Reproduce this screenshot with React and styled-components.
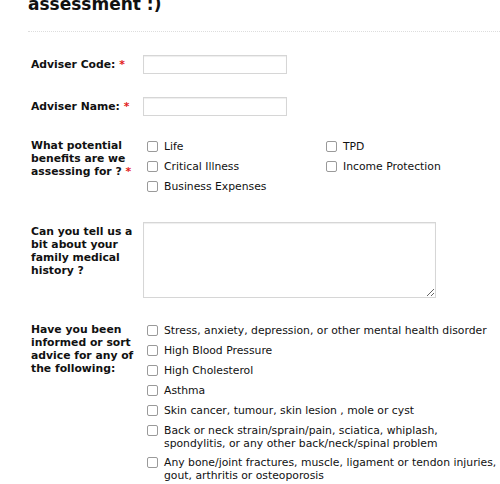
import React from 'react';
import styled, { createGlobalStyle } from 'styled-components';

const Global = createGlobalStyle`
  html, body { margin: 0; padding: 0; background: #fff; }
  body { font-family: "DejaVu Sans", Verdana, sans-serif; color: #111; }
`

const Page = styled.div`
  padding-left: 28px;
  overflow: hidden;
`

const Title = styled.h2`
  margin: -6px 0 0 0;
  font-size: 17px;
  font-weight: 700;
  line-height: 20px;
`

const Divider = styled.div`
  margin-top: 17px;
  border-top: 1px dotted #ddd;
`

const Row = styled.div`
  display: grid;
  grid-template-columns: 112px 1fr;
  align-items: ${p => p.center ? 'center' : 'start'};
  padding-left: 3px;
  margin-top: ${p => p.top}px;
`

const Label = styled.div`
  font-size: 10.8px;
  font-weight: 700;
  line-height: 13px;
  width: 108px;
  padding-top: ${p => p.pad || 0}px;
`

const Star = styled.span`
  color: #e21a1a;
`

const TextInput = styled.input`
  box-sizing: border-box;
  width: 144px;
  height: 19px;
  margin: 0;
  border: 1px solid #d6d6d6;
  box-shadow: inset 0 1px 1px #eee;
  outline: none;
`

const TextArea = styled.textarea`
  box-sizing: border-box;
  width: 293px;
  height: 76px;
  margin: 0;
  border: 1px solid #d6d6d6;
  box-shadow: inset 0 1px 1px #eee;
  outline: none;
`

const Options = styled.div`
  display: grid;
  grid-template-columns: ${p => p.cols || '1fr'};
  row-gap: 5px;
`

const Option = styled.label`
  display: flex;
  align-items: flex-start;
  min-height: 15px;
  padding-top: 1px;
  box-sizing: border-box;
  font-size: 10.8px;
  line-height: 13px;
  color: #111;
`

const Box = styled.input.attrs({ type: 'checkbox' })`
  appearance: none;
  flex: none;
  width: 11px;
  height: 11px;
  margin: 1px 6px 0 4px;
  border: 1px solid #9a9a9a;
  border-radius: 2px;
  background: #fff;
`

const benefits = ['Life', 'TPD', 'Critical Illness', 'Income Protection', 'Business Expenses']

const conditions = [
  'Stress, anxiety, depression, or other mental health disorder',
  'High Blood Pressure',
  'High Cholesterol',
  'Asthma',
  'Skin cancer, tumour, skin lesion , mole or cyst',
  'Back or neck strain/sprain/pain, sciatica, whiplash, spondylitis, or any other back/neck/spinal problem',
  'Any bone/joint fractures, muscle, ligament or tendon injuries, gout, arthritis or osteoporosis',
]

const App = () => (
  <>
    <Global />
    <Page>
      <Title>assessment :)</Title>
      <Divider />
      <Row center top={23}>
        <Label>Adviser Code: <Star>*</Star></Label>
        <TextInput />
      </Row>
      <Row center top={23}>
        <Label>Adviser Name: <Star>*</Star></Label>
        <TextInput />
      </Row>
      <Row top={23}>
        <Label>What potential benefits are we assessing for ? <Star>*</Star></Label>
        <Options cols="179px 1fr">
          {benefits.map(b => (
            <Option key={b}><Box />{b}</Option>
          ))}
        </Options>
      </Row>
      <Row top={28}>
        <Label pad={3}>Can you tell us a bit about your family medical history ?</Label>
        <TextArea />
      </Row>
      <Row top={25}>
        <Label>Have you been informed or sort advice for any of the following:</Label>
        <Options>
          {conditions.map(c => (
            <Option key={c}><Box />{c}</Option>
          ))}
        </Options>
      </Row>
    </Page>
  </>
)

export default App;
